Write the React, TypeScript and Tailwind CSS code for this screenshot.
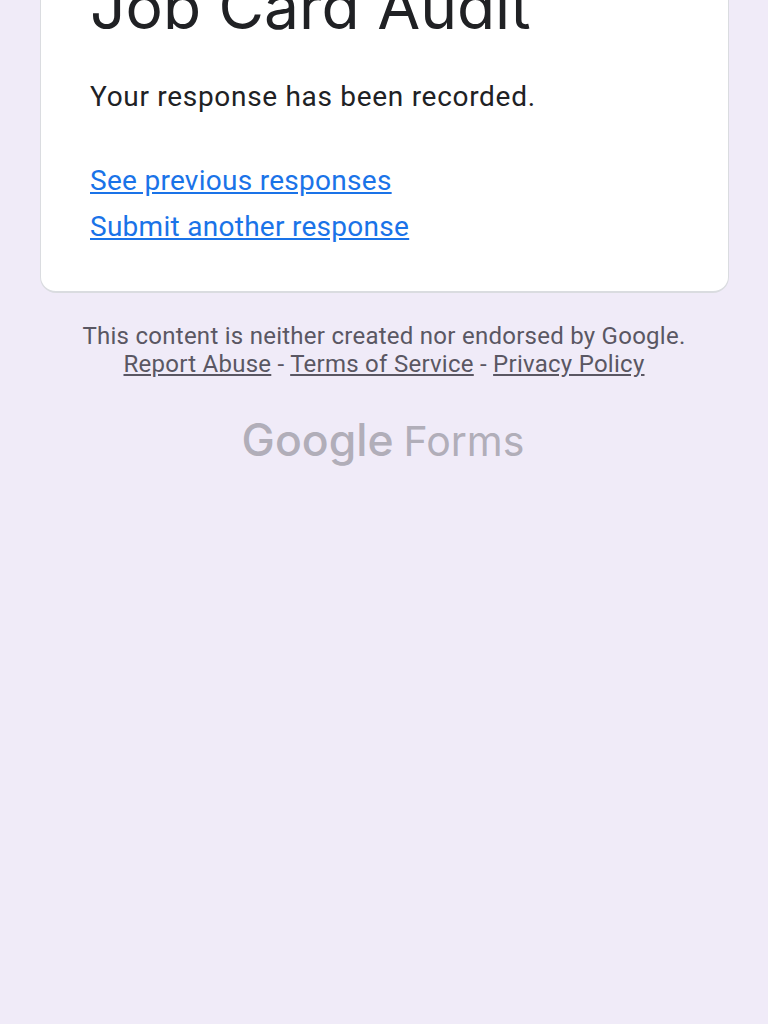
const App = () => {
  return (
    <div className="h-[1024px] overflow-hidden bg-[#f0ebf8] font-['Roboto',sans-serif]">
      <div className="ml-10 mr-[39px] mt-[-40px] h-[333px] rounded-[16px] bg-white border border-[#dadce0] border-b-2 px-[49px]">
        <h1 className="font-['Inter',sans-serif] pt-[16px] text-[62.3px] leading-[60px] text-[#202124]">Job Card Audit</h1>
        <p className="mt-[42px] text-[28px] leading-[36px] tracking-[0.7px] text-[#202124]">Your response has been recorded.</p>
        <div className="mt-[48px] flex flex-col gap-[10px] items-start text-[28px] leading-[36px] tracking-[0.28px] text-[#1a73e8]">
          <a href="#" className="underline">See previous responses</a>
          <a href="#" className="underline">Submit another response</a>
        </div>
      </div>
      <div className="mt-[29px] flex flex-col items-center text-[24px] leading-[28px] tracking-[0.26px] text-[#5a5763]">
        <p>This content is neither created nor endorsed by Google.</p>
        <p>
          <a href="#" className="underline">Report Abuse</a>
          <span> - </span>
          <a href="#" className="underline">Terms of Service</a>
          <span> - </span>
          <a href="#" className="underline">Privacy Policy</a>
        </p>
      </div>
      <div className="mt-[32px] pr-[2px] flex justify-center items-baseline gap-[10px] font-['Inter',sans-serif] text-[#b1aeb9]">
        <span className="text-[44.5px] leading-[60px] font-medium">Google</span>
        <span className="text-[41px] leading-[60px]">Forms</span>
      </div>
    </div>
  );
};

export default App;
